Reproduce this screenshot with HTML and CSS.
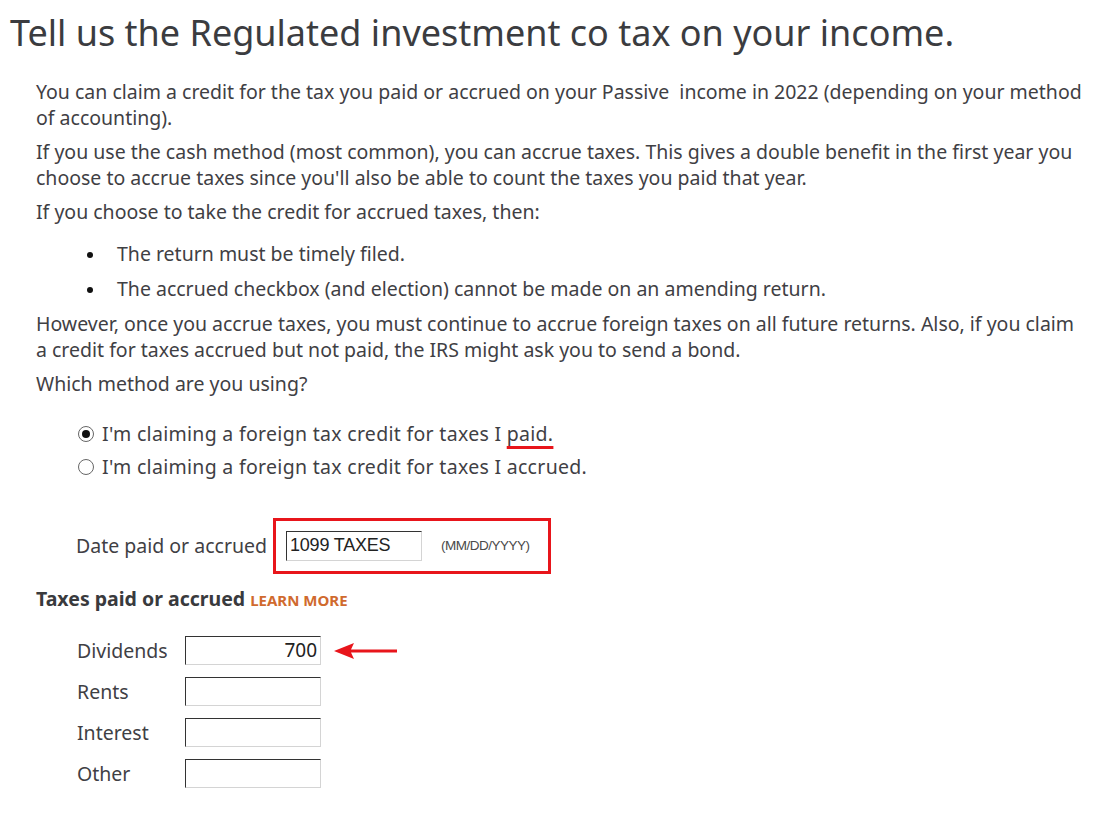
FILE: index.html
```html
<!DOCTYPE html>
<html lang="en">
<head>
<meta charset="utf-8">
<title>Regulated investment co tax</title>
<link rel="stylesheet" href="styles.css">
</head>
<body>
<main class="page">
  <h1 class="title">Tell us the Regulated investment co tax on your income.</h1>
  <section class="content">
    <p class="para">You can claim a credit for the tax you paid or accrued on your Passive&nbsp; income in 2022 (depending on your method of accounting).</p>
    <p class="para">If you use the cash method (most common), you can accrue taxes. This gives a double benefit in the first year you choose to accrue taxes since you'll also be able to count the taxes you paid that year.</p>
    <p class="para">If you choose to take the credit for accrued taxes, then:</p>
    <ul class="bullets">
      <li>The return must be timely filed.</li>
      <li>The accrued checkbox (and election) cannot be made on an amending return.</li>
    </ul>
    <p class="para">However, once you accrue taxes, you must continue to accrue foreign taxes on all future returns. Also, if you claim a credit for taxes accrued but not paid, the IRS might ask you to send a bond.</p>
    <p class="para">Which method are you using?</p>
    <div class="radios">
      <label class="radio"><span class="dot checked"></span><span>I'm claiming a foreign tax credit for taxes I <span class="marked">paid.</span></span></label>
      <label class="radio"><span class="dot"></span><span>I'm claiming a foreign tax credit for taxes I accrued.</span></label>
    </div>
    <div class="date-row">
      <span class="date-label">Date paid or accrued</span>
      <span class="highlight">
        <span class="field date-field">1099 TAXES</span>
        <span class="hint">(MM/DD/YYYY)</span>
      </span>
    </div>
    <h2 class="subhead">Taxes paid or accrued <span class="learn">LEARN MORE</span></h2>
    <div class="amounts">
      <div class="amount-row">
        <span class="amount-label">Dividends</span>
        <span class="field amount-field">700</span>
        <svg class="arrow" width="70" height="20" viewBox="0 0 70 20"><path d="M4 10 L24 2 L21 8.5 L67 8.5 L67 11.5 L21 11.5 L24 18 Z" fill="#e8151b"/></svg>
      </div>
      <div class="amount-row">
        <span class="amount-label">Rents</span>
        <span class="field amount-field"></span>
      </div>
      <div class="amount-row">
        <span class="amount-label">Interest</span>
        <span class="field amount-field"></span>
      </div>
      <div class="amount-row">
        <span class="amount-label">Other</span>
        <span class="field amount-field"></span>
      </div>
    </div>
  </section>
</main>
</body>
</html>
```

FILE: styles.css
```css
html, body {
  margin: 0;
  padding: 0;
  background: #ffffff;
}

body {
  font-family: "Noto Sans", "Open Sans", "Liberation Sans", sans-serif;
  color: #3f4044;
}

.page {
  padding: 11px 0 0 10px;
}

.title {
  margin: 0;
  font-size: 36px;
  font-weight: 400;
  line-height: 44px;
  color: #3b3c40;
}

.content {
  padding: 24px 0 0 26px;
  font-size: 19.5px;
  line-height: 26px;
}

.para {
  margin: 0 0 8px 0;
  padding-right: 18px;
}

.bullets {
  margin: 16px 0 8px 0;
  padding: 0 0 0 81px;
  list-style: none;
}

.bullets li {
  position: relative;
  margin-bottom: 9px;
}

.bullets li::before {
  content: "";
  position: absolute;
  left: -30px;
  top: 11px;
  width: 6px;
  height: 6px;
  border-radius: 50%;
  background: #111;
}

.radios {
  display: flex;
  flex-direction: column;
  gap: 7px;
  margin: 24px 0 0 42px;
}

.radio {
  display: flex;
  align-items: center;
  gap: 8px;
  line-height: 26px;
  letter-spacing: 0.3px;
}

.dot {
  width: 16px;
  height: 16px;
  flex: none;
  border: 1.5px solid #666;
  border-radius: 50%;
  box-sizing: border-box;
  display: inline-flex;
  align-items: center;
  justify-content: center;
  background: #fff;
}

.dot.checked::after {
  content: "";
  width: 8px;
  height: 8px;
  border-radius: 50%;
  background: #111;
}

.marked {
  text-decoration: underline;
  text-decoration-color: #e8151b;
  text-decoration-thickness: 3px;
  text-underline-offset: 5px;
}

.date-row {
  display: flex;
  align-items: center;
  margin: 38px 0 0 40px;
}

.date-label {
  margin-right: 6px;
}

.highlight {
  display: flex;
  align-items: center;
  border: 3px solid #e8151b;
  padding: 10px 0 10px 10px;
  width: 262px;
}

.field {
  box-sizing: border-box;
  display: inline-block;
  background: #fff;
  border-top: 1.5px solid #333;
  border-left: 1.5px solid #333;
  border-right: 1px solid #d4d4d4;
  border-bottom: 1px solid #d4d4d4;
  color: #222;
}

.date-field {
  width: 136px;
  height: 30px;
  padding: 0 3px;
  font-family: "Liberation Sans", Arial, sans-serif;
  font-size: 18px;
  line-height: 27px;
  letter-spacing: -0.2px;
}

.hint {
  margin-left: 19px;
  font-family: "Liberation Sans", Arial, sans-serif;
  font-size: 13.5px;
  letter-spacing: -0.5px;
  color: #4a4a4a;
}

.subhead {
  margin: 12px 0 0 0;
  font-size: 19.5px;
  font-weight: 700;
  line-height: 26px;
  color: #393a3d;
}

.learn {
  font-size: 15px;
  font-weight: 700;
  color: #d06a2e;
}

.amounts {
  display: flex;
  flex-direction: column;
  gap: 12px;
  margin: 23px 0 0 41px;
}

.amount-row {
  display: flex;
  align-items: center;
}

.amount-label {
  width: 108px;
}

.amount-field {
  width: 136px;
  height: 29px;
  padding: 0 3px;
  text-align: right;
  font-size: 19px;
  line-height: 27px;
}

.arrow {
  margin-left: 9px;
}
```
